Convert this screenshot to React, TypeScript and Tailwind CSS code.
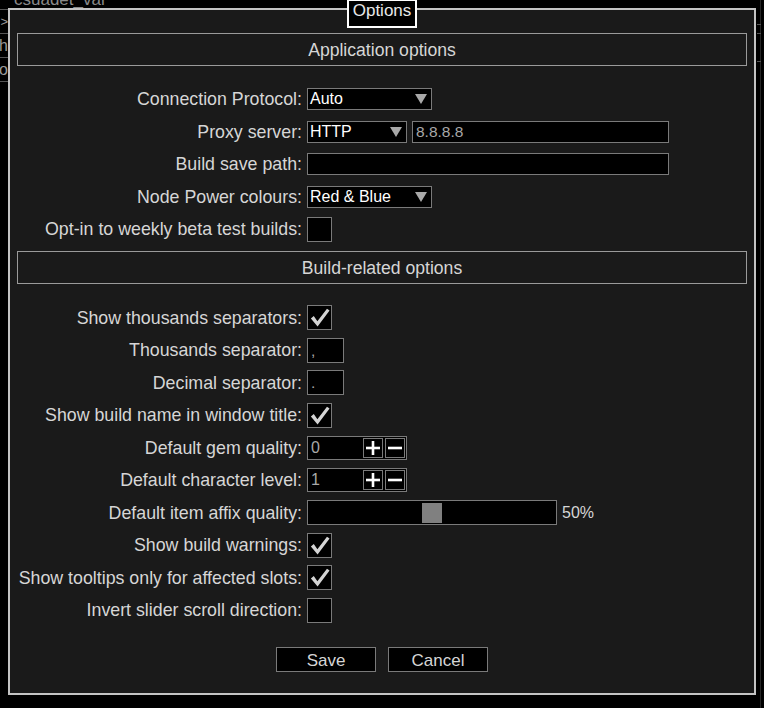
import type { ReactNode } from 'react'

const labelColor = 'text-[#d6d6d6]'

function Arrow() {
  return (
    <svg width="12" height="10" viewBox="0 0 12 10" className="shrink-0">
      <polygon points="0,0 12,0 6,10" fill="#a8a8a8" />
    </svg>
  )
}

function Dropdown({ value, width }: { value: string; width: string }) {
  return (
    <div className={`flex h-[22px] items-center justify-between border border-[#7a7a7a] bg-black pl-[2px] pr-[4px] ${width}`}>
      <span className="text-[16px] leading-none text-white">{value}</span>
      <Arrow />
    </div>
  )
}

function TextBox({ value, width, height = 'h-[22px]' }: { value?: string; width: string; height?: string }) {
  return (
    <div className={`flex items-center border border-[#7a7a7a] bg-black pl-[3px] ${width} ${height}`}>
      <span className="text-[15.5px] leading-none text-[#a8a8a8]">{value}</span>
    </div>
  )
}

function Check({ checked }: { checked?: boolean }) {
  return (
    <div className="flex h-[25px] w-[25px] items-center justify-center border border-[#7a7a7a] bg-black">
      {checked && (
        <svg width="23" height="23" viewBox="0 0 24 24">
          <polygon points="3,13 6,10.5 9.8,16 19.8,2.8 22.5,4.8 10,21.5" fill="#d4d4d4" />
        </svg>
      )}
    </div>
  )
}

function StepButton({ plus }: { plus?: boolean }) {
  return (
    <div className="flex h-[20px] w-[20px] items-center justify-center border border-[#7a7a7a] bg-black">
      <svg width="14" height="14" viewBox="0 0 14 14">
        <rect x="0" y="5.7" width="14" height="2.6" fill="#ffffff" />
        {plus && <rect x="5.7" y="0" width="2.6" height="14" fill="#ffffff" />}
      </svg>
    </div>
  )
}

function NumberBox({ value }: { value: string }) {
  return (
    <div className="flex h-[24px] w-[100px] items-center border border-[#7a7a7a] bg-black pl-[3px] pr-[1px]">
      <span className="flex-1 text-[16px] leading-none text-[#a8a8a8]">{value}</span>
      <div className="flex gap-[2px]">
        <StepButton plus />
        <StepButton />
      </div>
    </div>
  )
}

function Slider() {
  return (
    <div className="flex items-center gap-[5px]">
      <div className="flex h-[25px] w-[250px] items-center justify-center border border-[#7a7a7a] bg-black">
        <div className="h-[20px] w-[20px] bg-[#808080]" />
      </div>
      <span className={`pt-[1px] text-[16px] ${labelColor}`}>50%</span>
    </div>
  )
}

function Row({ label, children }: { label: string; children: ReactNode }) {
  return (
    <div className="flex h-[32.5px] items-center">
      <div className={`w-[292px] translate-y-[1px] text-right text-[17.8px] leading-none ${labelColor}`}>{label}</div>
      <div className="ml-[5px]">{children}</div>
    </div>
  )
}

function Section({ title }: { title: string }) {
  return (
    <div className={`mx-[7px] flex h-[33px] items-center justify-center border border-[#9a9a9a] pt-[2px] text-[17.6px] ${labelColor}`}>
      {title}
    </div>
  )
}

function Backdrop() {
  return (
    <>
      <div className="absolute left-[14px] top-[-13px] text-[17px] text-[#8a8a8a]">csuadet_var</div>
      <div className="absolute left-0 top-[9px] flex w-[8px] flex-col overflow-hidden text-[16px] text-[#9a9a9a]">
        <div className="h-px w-full bg-[#555]" />
        <div className="flex h-[23px] items-center justify-end text-[13px]">&gt;</div>
        <div className="h-px w-full bg-[#555]" />
        <div className="flex h-[23px] items-center justify-end whitespace-nowrap">gh</div>
        <div className="h-px w-full bg-[#555]" />
        <div className="flex h-[23px] items-center justify-end whitespace-nowrap">/o</div>
        <div className="h-px w-full bg-[#555]" />
      </div>
      <div className="absolute right-[3px] top-0 h-full w-px bg-[#262626]" />
      <div className="absolute left-[757px] top-[24px] h-px w-[4px] bg-[#555]" />
      <div className="absolute left-[757px] top-[33px] h-px w-[4px] bg-[#555]" />
      <div className="absolute left-[757px] top-[61px] h-px w-[4px] bg-[#555]" />
    </>
  )
}

export default function App() {
  return (
    <div className="relative h-[708px] w-[764px] overflow-hidden bg-black pl-[8px] pt-[8px] font-['Liberation_Sans',Arial,sans-serif]">
      <Backdrop />
      <div className="relative h-[687px] w-[748px] border-2 border-[#c4c4c4] bg-[#1a1a1a]">
        <div className="absolute left-1/2 top-[-11px] flex h-[28.5px] w-[70px] -translate-x-1/2 justify-center border-2 border-white bg-black text-[17px] leading-[20px] text-[#e8e8e8]">
          Options
        </div>

        <div className="pt-[23px]">
          <Section title="Application options" />
          <div className="mt-[17px]">
            <Row label="Connection Protocol:">
              <Dropdown value="Auto" width="w-[125px]" />
            </Row>
            <Row label="Proxy server:">
              <div className="flex gap-[5px]">
                <Dropdown value="HTTP" width="w-[100px]" />
                <TextBox value="8.8.8.8" width="w-[257px]" />
              </div>
            </Row>
            <Row label="Build save path:">
              <TextBox width="w-[362px]" />
            </Row>
            <Row label="Node Power colours:">
              <Dropdown value="Red & Blue" width="w-[125px]" />
            </Row>
            <Row label="Opt-in to weekly beta test builds:">
              <Check />
            </Row>
          </div>

          <div className="mt-[5.5px]">
            <Section title="Build-related options" />
          </div>
          <div className="mt-[17.5px]">
            <Row label="Show thousands separators:">
              <Check checked />
            </Row>
            <Row label="Thousands separator:">
              <TextBox value="," width="w-[37px]" height="h-[25px]" />
            </Row>
            <Row label="Decimal separator:">
              <TextBox value="." width="w-[37px]" height="h-[25px]" />
            </Row>
            <Row label="Show build name in window title:">
              <Check checked />
            </Row>
            <Row label="Default gem quality:">
              <NumberBox value="0" />
            </Row>
            <Row label="Default character level:">
              <NumberBox value="1" />
            </Row>
            <Row label="Default item affix quality:">
              <Slider />
            </Row>
            <Row label="Show build warnings:">
              <Check checked />
            </Row>
            <Row label="Show tooltips only for affected slots:">
              <Check checked />
            </Row>
            <Row label="Invert slider scroll direction:">
              <Check />
            </Row>
          </div>

          <div className="mt-[20.5px] flex justify-center gap-[12px]">
            {['Save', 'Cancel'].map((b) => (
              <button
                key={b}
                type="button"
                className={`flex h-[25px] w-[100px] items-center justify-center border border-[#7a7a7a] bg-black pt-[1px] text-[17px] leading-none ${labelColor}`}
              >
                {b}
              </button>
            ))}
          </div>
        </div>
      </div>
    </div>
  )
}
